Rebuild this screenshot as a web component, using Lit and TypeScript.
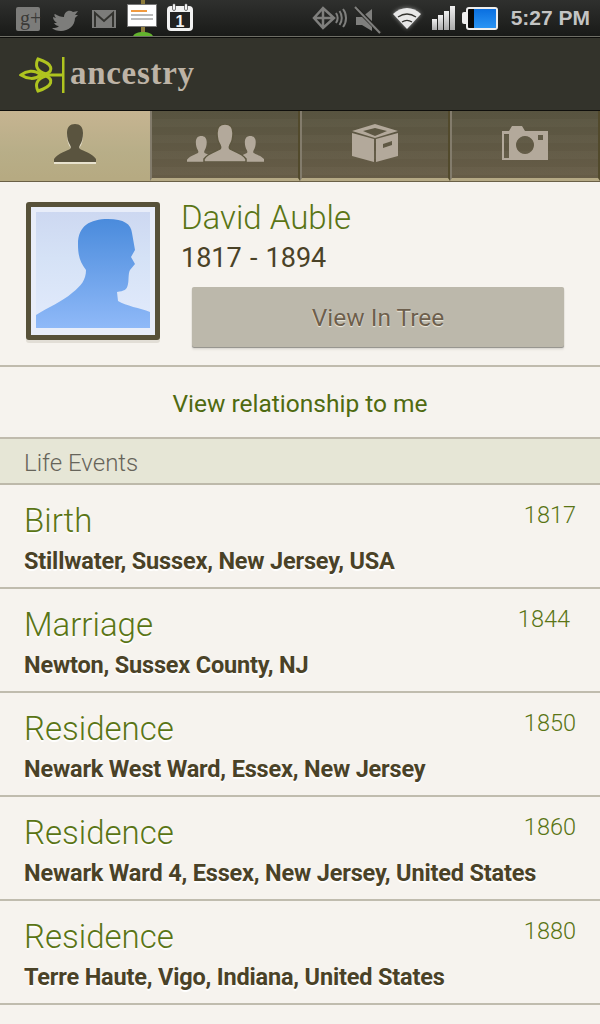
import { LitElement, css, html, svg } from 'lit';
import { customElement } from 'lit/decorators.js';

type LifeEvent = { name: string; place: string; year: string; inset?: boolean };

const EVENTS: LifeEvent[] = [
  { name: 'Birth', place: 'Stillwater, Sussex, New Jersey, USA', year: '1817' },
  { name: 'Marriage', place: 'Newton, Sussex County, NJ', year: '1844', inset: true },
  { name: 'Residence', place: 'Newark West Ward, Essex, New Jersey', year: '1850' },
  { name: 'Residence', place: 'Newark Ward 4, Essex, New Jersey, United States', year: '1860' },
  { name: 'Residence', place: 'Terre Haute, Vigo, Indiana, United States', year: '1880' },
];

const personIcon = svg`<path d="M21 0c5 0 8 3 8 9 0 5-1 9-3 12-1 2-1 3 0 4 3 2 12 4 16 10v3H0v-3c4-6 13-8 16-10 1-1 1-2 0-4-2-3-3-7-3-12 0-6 3-9 8-9z"/>`;

@customElement('app-root')
export class AppRoot extends LitElement {
  renderStatusBar() {
    return html`<div class="status">
      <div class="status-left">
        <svg width="196" height="36" viewBox="0 0 196 36">
          <rect x="16" y="7" width="24" height="24" rx="2" fill="#7c7c7a" />
          <text x="20" y="25" class="gplus">g+</text>
          <path d="M55 14c3 2 6 3 9 3 0-5 5-8 9-5l5-1-3 4 3 0-3 3c0 8-7 13-14 13-4 0-7-1-9-3 3 0 5 0 7-2-3 0-4-2-5-3h3c-3-2-4-4-4-6l3 1c-2-2-2-4-1-4z" fill="#7d7d7b" />
          <rect x="92" y="10" width="24" height="18" fill="#7c7c7a" />
          <path d="M95 27V13l9 8 9-8v14" fill="none" stroke="#33332f" stroke-width="2" />
          <rect x="141" y="0" width="4" height="34" fill="#8d7c3c" />
          <path d="M133 36c2-3 5-4 10-4s8 1 10 4z" fill="#63b32e" />
          <rect x="127.500" y="4.500" width="29" height="22" fill="#fff" stroke="#777" />
          <rect x="131" y="10" width="16" height="2" fill="#f19a3e" />
          <rect x="131" y="14" width="22" height="2" fill="#bbb" />
          <rect x="131" y="18" width="22" height="2" fill="#bbb" />
          <rect x="168.500" y="7.500" width="23" height="22" rx="2.500" fill="#222" stroke="#f2f2f2" stroke-width="3" />
          <rect x="168" y="7" width="24" height="5" fill="#f2f2f2" />
          <rect x="172.500" y="3.500" width="3" height="7" rx="1.500" fill="#f2f2f2" stroke="#222" stroke-width=".6" />
          <rect x="184.500" y="3.500" width="3" height="7" rx="1.500" fill="#f2f2f2" stroke="#222" stroke-width=".6" />
          <text x="180" y="27" text-anchor="middle" class="cal">1</text>
        </svg>
      </div>
      <div class="status-right">
        <svg class="nfc" width="36" height="24" viewBox="0 0 36 24" fill="none" stroke="#7f7f7d" stroke-width="2.500">
          <path d="M11 2 2 12l9 10 11-10zM2 12h20M11 2v20" />
          <path d="M24 7c2 3 2 7 0 10M27.500 5c3 4 3 10 0 14M31 3c4 5 4 13 0 18" stroke-width="2" />
        </svg>
        <svg class="mute" width="28" height="30" viewBox="0 0 28 30">
          <path d="M2 12h6l10-8v22l-10-6H2z" fill="#7f7f7d" />
          <path d="M2 3l25 25" stroke="#22221f" stroke-width="4" />
          <path d="M1 2l25 26" stroke="#7f7f7d" stroke-width="2" />
        </svg>
        <svg class="wifi" width="30" height="24" viewBox="0 0 30 24" fill="none">
          <path d="M1 8C9 0 21 0 29 8L15 23z" fill="#e8e8e8" />
          <path d="M6 11c6-4 12-4 18 0M10 16c3-2 7-2 10 0" stroke="#33332f" stroke-width="1.300" />
        </svg>
        <div class="bars">
          ${[11, 15, 19, 24].map((h) => html`<span style="height:${h}px"></span>`)}
        </div>
        <div class="battery"><span class="tip"></span><span class="cell"><i></i></span></div>
        <span class="clock">5:27 PM</span>
      </div>
    </div>`;
  }

  renderHeader() {
    return html`<header class="brand">
      <svg class="leaf" width="46" height="36" viewBox="0 0 46 36" fill="none" stroke="#afc41f" stroke-width="3">
        <path d="M2 18c5-4 13-6 20 0-6 5-14 4-20 0z" />
        <path d="M19 2C16 8 17 14 27 17 34 14 35 7 19 2z" />
        <path d="M19 34C16 28 17 22 27 19 34 22 35 29 19 34z" />
        <path d="M22 18H43" />
        <rect x="43" y="0" width="2.500" height="36" fill="#afc41f" stroke="none" />
      </svg>
      <span class="word">ancestry</span>
    </header>`;
  }

  renderTabs() {
    return html`<nav class="tabs">
      <div class="tab active">
        <svg class="shadowed" width="42" height="38" viewBox="0 0 42 38" fill="#5a543f">${personIcon}</svg>
      </div>
      <div class="tab">
        <svg width="77" height="38" viewBox="0 0 77 38" fill="#b3a99b">
          <g transform="translate(0 12) scale(.68)">${personIcon}</g>
          <g transform="translate(49 12) scale(.68)">${personIcon}</g>
          <g transform="translate(17 0)" stroke="#5d5740" stroke-width="1.500">${personIcon}</g>
        </svg>
      </div>
      <div class="tab">
        <svg width="46" height="38" viewBox="0 0 46 38" fill="#b3a99b">
          <path fill-rule="evenodd" d="M0 7 23 0l23 7-23 7zM11 7l12 5 12-5-12-3z" />
          <path d="M0 9 22 15V38L0 32z" />
          <path fill-rule="evenodd" d="M24 15 46 9V32L24 38zM31 20v4l9-3v-4z" />
        </svg>
      </div>
      <div class="tab">
        <svg width="46" height="34" viewBox="0 0 46 34" fill="#b3a99b">
          <path fill-rule="evenodd" d="M0 5h7l3-5h10l3 5h23v29H0zM2 8v24h5V8zM23 10a9 9 0 1 0 .01 0zM36 9v5h5V9z" />
        </svg>
      </div>
    </nav>`;
  }

  renderPortrait() {
    return html`<div class="portrait">
      <div class="photo">
        <svg width="114" height="116" viewBox="0 0 114 116">
          <defs>
            <linearGradient id="fill" x1="0" y1="0" x2="0" y2="1">
              <stop offset="0" stop-color="#4a8bdc" />
              <stop offset="1" stop-color="#8fb9f8" />
            </linearGradient>
          </defs>
          <path fill="url(#fill)" d="M0 116V103C12 95 26 90 36 81 45 74 50 68 50 58 44 50 42 44 42 32 42 14 54 7 72 7 88 7 95 12 96 21L99 38 95 45 99 52 94 58C92 62 93 68 92 72 91 78 88 79 81 80L82 89C90 94 104 96 114 100V116Z" />
        </svg>
      </div>
    </div>`;
  }

  render() {
    return html`${this.renderStatusBar()}${this.renderHeader()}${this.renderTabs()}
      <section class="profile">
        ${this.renderPortrait()}
        <div class="who">
          <div class="name">David Auble</div>
          <div class="dates">1817 - 1894</div>
          <button class="tree">View In Tree</button>
        </div>
      </section>
      <div class="relationship">View relationship to me</div>
      <div class="section">Life Events</div>
      ${EVENTS.map(
        (e) => html`<div class="event">
          <div class="event-text">
            <div class="event-name">${e.name}</div>
            <div class="event-place">${e.place}</div>
          </div>
          <div class="event-year ${e.inset ? 'inset' : ''}">${e.year}</div>
        </div>`,
      )}`;
  }

  static styles = css`
    :host {
      display: block;
      width: 600px;
      height: 1024px;
      overflow: hidden;
      background: #f6f3ee;
      font-family: Roboto, 'Liberation Sans', sans-serif;
    }

    .status {
      height: 36px;
      display: flex;
      justify-content: space-between;
      background: linear-gradient(#2f302e, #191a18);
      border-bottom: 1px solid #6e6e66;
      box-shadow: 0 1px 0 #0c0c0a;
      position: relative;
    }
    .status-left svg {
      display: block;
    }
    .gplus {
      font: 20px 'Liberation Serif', serif;
      fill: #3a3a38;
    }
    .cal {
      font: bold 16px 'Liberation Sans', sans-serif;
      fill: #f2f2f2;
    }
    .status-right {
      display: flex;
      align-items: center;
      padding-right: 10px;
    }
    .nfc {
      margin-right: 6px;
    }
    .mute {
      margin: 3px 10px 0 0;
    }
    .wifi {
      margin-right: 10px;
      filter: drop-shadow(0 0 2px #ffffff80);
    }
    .bars {
      display: flex;
      align-items: flex-end;
      gap: 1px;
      height: 24px;
      margin: 0 7px 0 0;
    }
    .bars span {
      width: 5px;
      background: linear-gradient(#f0f0f0, #aaa);
    }
    .battery {
      display: flex;
      align-items: center;
      margin-right: 13px;
    }
    .tip {
      width: 4px;
      height: 12px;
      background: #eee;
      border-radius: 2px 0 0 2px;
    }
    .cell {
      width: 28px;
      height: 19px;
      border: 2px solid #eee;
      border-radius: 3px;
      background: #0a0a0a;
      display: flex;
      justify-content: flex-end;
    }
    .cell i {
      width: 22px;
      background: linear-gradient(#0a6fe0, #2a94f4);
    }
    .clock {
      font: bold 21px 'Liberation Sans', sans-serif;
      color: #c4c4c4;
    }

    .brand {
      height: 72px;
      margin-top: 1px;
      background: #33332b;
      display: flex;
      align-items: center;
      padding-left: 19px;
      box-sizing: border-box;
    }
    .leaf {
      flex: none;
      margin-top: 2px;
    }
    .word {
      font: bold 33px 'Liberation Serif', serif;
      color: #bdb3a6;
      margin: -2px 0 0 5px;
      letter-spacing: 0.7px;
    }

    .tabs {
      height: 72px;
      display: grid;
      grid-template-columns: 150px 150px 150px 150px;
      background: #5d5740;
      border-top: 1px solid #0f0f0c;
      border-bottom: 1px solid #6a6046;
      box-sizing: border-box;
    }
    .tab {
      display: flex;
      align-items: center;
      justify-content: center;
      box-sizing: border-box;
      padding-bottom: 4px;
      background: repeating-linear-gradient(#0000 0 8px, #ffffff06 8px 16px),
        linear-gradient(#585440, #665c47);
      border-bottom: 3px solid #b5a985;
      border-right: 2px solid #524a2c;
      border-left: 2px solid #837c6c;
    }
    .tab.active {
      background: linear-gradient(#c6b491, #b8ae88 60%, #b6aa82);
      border-left: 0;
      border-right: 0;
      border-bottom-color: #b6aa82;
    }
    .shadowed {
      filter: drop-shadow(0 2px 0 #e9e3cf);
    }

    .profile {
      height: 185px;
      box-sizing: border-box;
      display: flex;
      border-bottom: 2px solid #c0bbad;
    }
    .portrait {
      margin: 20px 0 0 26px;
      width: 134px;
      height: 138px;
      box-sizing: border-box;
      border: 5px solid #575139;
      border-radius: 3px;
      background: #e8edf9;
      padding: 5px;
      box-shadow: 0 3px 0 #e2ded6;
      flex: none;
    }
    .photo {
      width: 114px;
      height: 116px;
      background: linear-gradient(#cdd8f1, #d5e2f6 40%, #e3ebfc);
    }
    .photo svg {
      display: block;
    }
    .who {
      margin-left: 21px;
      padding-top: 17px;
    }
    .name {
      font-size: 33px;
      font-weight: 300;
      line-height: 38px;
      color: #5a7515;
    }
    .dates {
      font-size: 27px;
      font-weight: 400;
      line-height: 32px;
      margin-top: 5px;
      word-spacing: 1.500px;
      color: #4a4227;
    }
    .tree {
      display: block;
      margin: 13px 0 0 11px;
      width: 372px;
      height: 60px;
      border: 0;
      border-radius: 2px;
      background: #bcb8ab;
      box-shadow: 0 1px 1px #8f8d88, 0 3px 2px #e6e3dd;
      color: #6d5f4d;
      font-family: inherit;
      font-size: 24.500px;
      text-shadow: 0 1px 1px #f0ece0;
    }

    .relationship {
      height: 70px;
      box-sizing: border-box;
      padding-top: 3px;
      display: flex;
      align-items: center;
      justify-content: center;
      font-size: 24.500px;
      color: #4f6a10;
    }
    .section {
      height: 48px;
      box-sizing: border-box;
      border-top: 2px solid #c0bbad;
      border-bottom: 2px solid #bdb9aa;
      background: #e6e6d6;
      color: #66645a;
      font-size: 24px;
      font-weight: 300;
      line-height: 48px;
      padding-left: 24px;
    }
    .event {
      height: 104px;
      box-sizing: border-box;
      border-bottom: 2px solid #c0bcae;
      display: flex;
      justify-content: space-between;
      padding: 0 24px;
    }
    .event-text {
      flex: 1;
      width: 0;
    }
    .event-name {
      font-size: 33px;
      font-weight: 300;
      line-height: 40px;
      margin-top: 16px;
      color: #5a7515;
      text-shadow: 0 2px 1px #fff;
    }
    .event-place {
      font-size: 23.500px;
      font-weight: 700;
      letter-spacing: -0.18px;
      line-height: 30px;
      margin-top: 5px;
      white-space: nowrap;
      color: #4a4227;
      text-shadow: 0 2px 1px #fff;
    }
    .event-year {
      flex: none;
      font-size: 23.500px;
      font-weight: 300;
      line-height: 30px;
      margin-top: 15px;
      color: #5a7515;
    }
    .event-year.inset {
      margin-right: 6px;
    }
  `;
}
